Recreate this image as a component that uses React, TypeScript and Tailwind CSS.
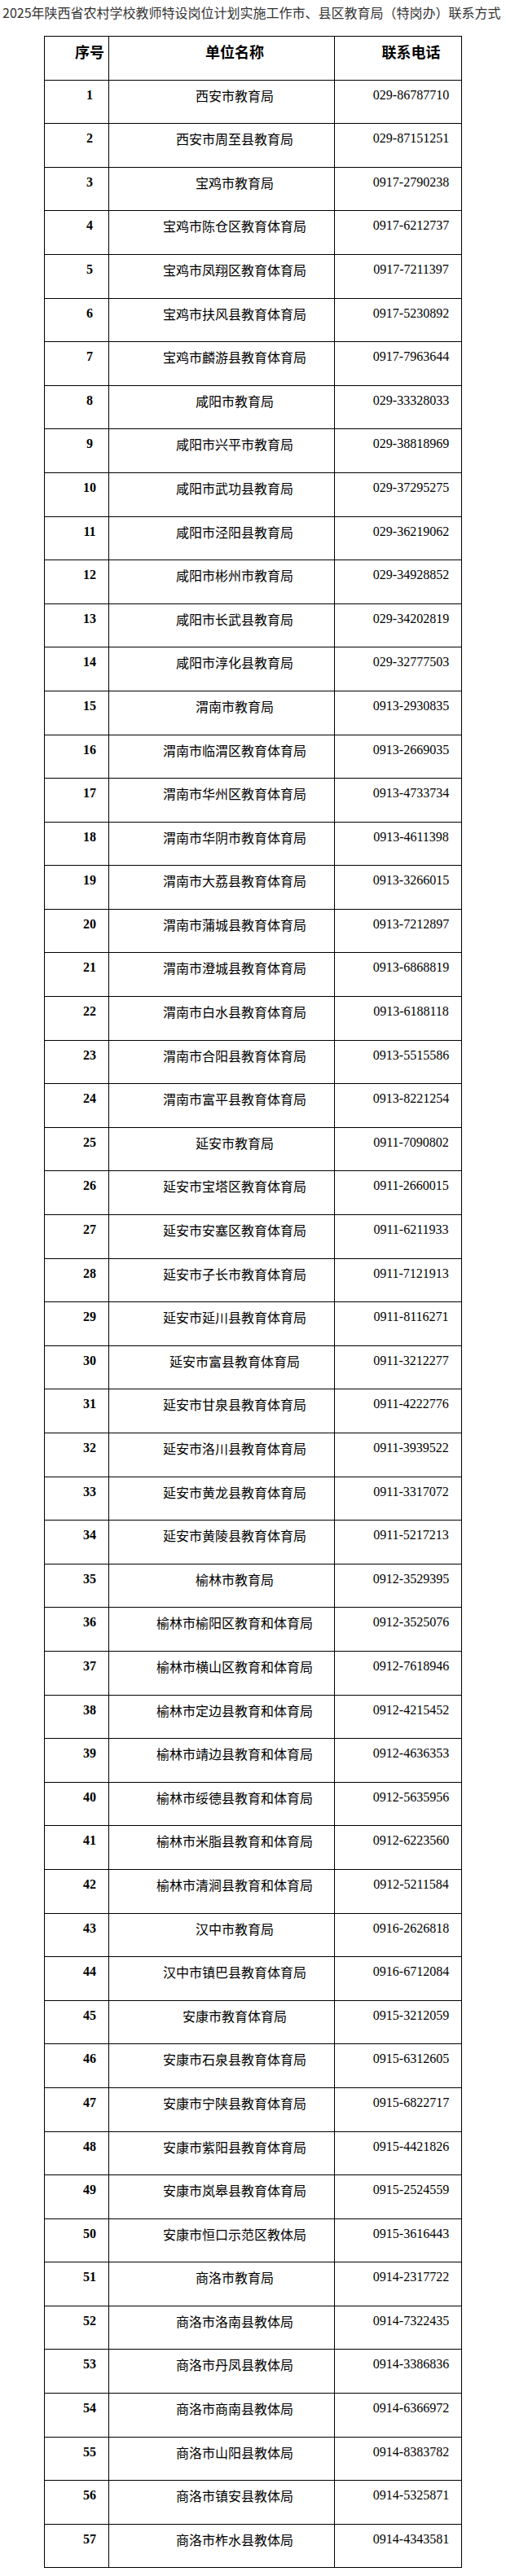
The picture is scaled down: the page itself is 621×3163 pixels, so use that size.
import React from "react";

type Row = [string, string];

const ROWS: Row[] = [
  ["西安市教育局", "029-86787710"],
  ["西安市周至县教育局", "029-87151251"],
  ["宝鸡市教育局", "0917-2790238"],
  ["宝鸡市陈仓区教育体育局", "0917-6212737"],
  ["宝鸡市凤翔区教育体育局", "0917-7211397"],
  ["宝鸡市扶风县教育体育局", "0917-5230892"],
  ["宝鸡市麟游县教育体育局", "0917-7963644"],
  ["咸阳市教育局", "029-33328033"],
  ["咸阳市兴平市教育局", "029-38818969"],
  ["咸阳市武功县教育局", "029-37295275"],
  ["咸阳市泾阳县教育局", "029-36219062"],
  ["咸阳市彬州市教育局", "029-34928852"],
  ["咸阳市长武县教育局", "029-34202819"],
  ["咸阳市淳化县教育局", "029-32777503"],
  ["渭南市教育局", "0913-2930835"],
  ["渭南市临渭区教育体育局", "0913-2669035"],
  ["渭南市华州区教育体育局", "0913-4733734"],
  ["渭南市华阴市教育体育局", "0913-4611398"],
  ["渭南市大荔县教育体育局", "0913-3266015"],
  ["渭南市蒲城县教育体育局", "0913-7212897"],
  ["渭南市澄城县教育体育局", "0913-6868819"],
  ["渭南市白水县教育体育局", "0913-6188118"],
  ["渭南市合阳县教育体育局", "0913-5515586"],
  ["渭南市富平县教育体育局", "0913-8221254"],
  ["延安市教育局", "0911-7090802"],
  ["延安市宝塔区教育体育局", "0911-2660015"],
  ["延安市安塞区教育体育局", "0911-6211933"],
  ["延安市子长市教育体育局", "0911-7121913"],
  ["延安市延川县教育体育局", "0911-8116271"],
  ["延安市富县教育体育局", "0911-3212277"],
  ["延安市甘泉县教育体育局", "0911-4222776"],
  ["延安市洛川县教育体育局", "0911-3939522"],
  ["延安市黄龙县教育体育局", "0911-3317072"],
  ["延安市黄陵县教育体育局", "0911-5217213"],
  ["榆林市教育局", "0912-3529395"],
  ["榆林市榆阳区教育和体育局", "0912-3525076"],
  ["榆林市横山区教育和体育局", "0912-7618946"],
  ["榆林市定边县教育和体育局", "0912-4215452"],
  ["榆林市靖边县教育和体育局", "0912-4636353"],
  ["榆林市绥德县教育和体育局", "0912-5635956"],
  ["榆林市米脂县教育和体育局", "0912-6223560"],
  ["榆林市清涧县教育和体育局", "0912-5211584"],
  ["汉中市教育局", "0916-2626818"],
  ["汉中市镇巴县教育体育局", "0916-6712084"],
  ["安康市教育体育局", "0915-3212059"],
  ["安康市石泉县教育体育局", "0915-6312605"],
  ["安康市宁陕县教育体育局", "0915-6822717"],
  ["安康市紫阳县教育体育局", "0915-4421826"],
  ["安康市岚皋县教育体育局", "0915-2524559"],
  ["安康市恒口示范区教体局", "0915-3616443"],
  ["商洛市教育局", "0914-2317722"],
  ["商洛市洛南县教体局", "0914-7322435"],
  ["商洛市丹凤县教体局", "0914-3386836"],
  ["商洛市商南县教体局", "0914-6366972"],
  ["商洛市山阳县教体局", "0914-8383782"],
  ["商洛市镇安县教体局", "0914-5325871"],
  ["商洛市柞水县教体局", "0914-4343581"],
];

const cell = "border-r border-b border-black pl-[32px] pt-[8px] text-center leading-[20px]";
const serif = "font-['Liberation_Serif','Noto_Sans_CJK_SC',serif]";
const cjk = "font-['Noto_Sans_CJK_SC',sans-serif]";

export default function App() {
  return (
    <div className="w-[621px] min-h-[3163px] bg-white text-black">
      <h1
        className={`pl-[3px] text-[16px] leading-[30px] text-[#333] whitespace-nowrap ${cjk}`}
      >
        2025年陕西省农村学校教师特设岗位计划实施工作市、县区教育局（特岗办）联系方式
      </h1>

      <div className="mt-[14px] ml-[54px] w-[513px] grid grid-cols-[79px_277px_156px] auto-rows-[53.6px] border-l border-t border-black">
        <div className={`${cell} text-[18px] font-bold ${cjk}`}>序号</div>
        <div className={`${cell} text-[18px] font-bold ${cjk}`}>单位名称</div>
        <div className={`${cell} text-[18px] font-bold ${cjk}`}>联系电话</div>

        {ROWS.map(([name, phone], i) => (
          <React.Fragment key={i}>
            <div className={`${cell} text-[16px] font-bold ${serif}`}>{i + 1}</div>
            <div className={`${cell} text-[16px] whitespace-nowrap ${cjk}`}>{name}</div>
            <div className={`${cell} text-[16px] whitespace-nowrap ${serif}`}>{phone}</div>
          </React.Fragment>
        ))}
      </div>
    </div>
  );
}
